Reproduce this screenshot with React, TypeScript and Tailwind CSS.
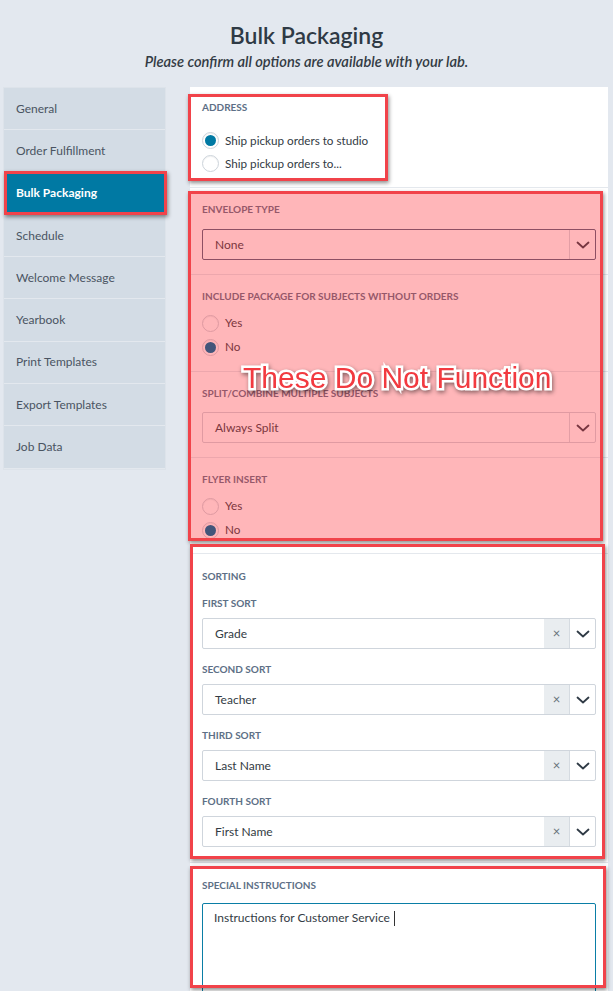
import React from "react";

const navItems = [
  "General",
  "Order Fulfillment",
  "Bulk Packaging",
  "Schedule",
  "Welcome Message",
  "Yearbook",
  "Print Templates",
  "Export Templates",
  "Job Data",
];

const Chevron = () => (
  <svg width="14" height="8" viewBox="0 0 14 8" fill="none">
    <path d="M1.5 1.5 L7 6.5 L12.5 1.5" stroke="#2f3a45" strokeWidth="1.8" strokeLinecap="round" strokeLinejoin="round" />
  </svg>
);

const Label = ({ children, className = "" }: { children: React.ReactNode; className?: string }) => (
  <div className={`text-[10px] leading-[10px] font-bold uppercase text-[#5d6f86] ${className}`}>{children}</div>
);

const Radio = ({
  label,
  checked,
  dot = "#0079a3",
  h = "h-[24px]",
}: {
  label: string;
  checked?: boolean;
  dot?: string;
  h?: string;
}) => (
  <div className={`flex items-center ${h} gap-[6px]`}>
    <span className="w-[17px] h-[17px] rounded-full border border-[#cdd4db] bg-white flex items-center justify-center shadow-[inset_0_1px_1px_rgba(0,0,0,0.06)]">
      {checked && <span className="relative z-10 w-[11px] h-[11px] rounded-full" style={{ backgroundColor: dot }} />}
    </span>
    <span className="text-[11.7px] text-[#333b44]">{label}</span>
  </div>
);

const Select = ({ value, clearable, dark }: { value: string; clearable?: boolean; dark?: boolean }) => (
  <div className={`flex h-[31px] bg-white border rounded-[2px] ${dark ? "border-[#52627c]" : "border-[#cfd5dc]"}`}>
    <div className="flex-1 flex items-center pl-[12px] text-[12px] text-[#333b44]">{value}</div>
    {clearable && (
      <div className="w-[25px] flex items-center justify-center bg-[#e9edf0] text-[13px] text-[#666f78]">×</div>
    )}
    <div className="w-[26px] flex items-center justify-center border-l border-[#d5dbe1]">
      <Chevron />
    </div>
  </div>
);

const Mark = ({ className }: { className: string }) => (
  <div className={`absolute border-[3px] border-[#f1434a] shadow-[1px_2px_4px_rgba(0,0,0,0.45)] pointer-events-none ${className}`} />
);

export default function App() {
  return (
    <div className="min-h-screen bg-[#e3e8ef] font-['Lato','Open_Sans',sans-serif] pb-4">
      <div className="pt-[20px] text-center">
        <h1 className="text-[23px] leading-[30px] font-semibold text-[#2f3a45]">Bulk Packaging</h1>
        <p className="mt-[1px] text-[14.7px] leading-[20px] italic font-semibold text-[#333b44]">
          Please confirm all options are available with your lab.
        </p>
      </div>

      <div className="mt-[16px] flex items-start pl-[3px]">
        <nav className="relative w-[163px] bg-[#d3dce5] border border-[#dde3ea]">
          {navItems.map((item) => (
            <div
              key={item}
              className={`h-[42.3px] flex items-center pl-[12px] text-[12px] border-b border-[#e3e8ee] last:border-b-0 ${
                item === "Bulk Packaging" ? "bg-[#0079a3] text-white font-bold" : "text-[#4a5462]"
              }`}
            >
              {item}
            </div>
          ))}
          <Mark className="left-0 right-[-2px] top-[83px] h-[44px]" />
        </nav>

        <main className="ml-[24px] w-[418px] bg-white">
          {/* Address */}
          <section className="relative px-[12px] pt-[15px] pb-[12px] border-b border-[#e4e8ed]">
            <Label>Address</Label>
            <div className="mt-[17px]">
              <Radio label="Ship pickup orders to studio" checked h="h-[23px]" />
              <Radio label="Ship pickup orders to..." h="h-[23px]" />
            </div>
            <Mark className="left-[-2px] top-[7px] w-[200px] h-[87px]" />
          </section>

          {/* Not functioning group */}
          <div className="relative">
            <section className="px-[12px] pt-[16px] pb-[14px] border-b border-[#e4e8ed]">
              <Label className="mb-[15px]">Envelope Type</Label>
              <Select value="None" dark />
            </section>
            <section className="px-[12px] pt-[16px] pb-[12px] border-b border-[#e4e8ed]">
              <Label className="mb-[10px]">Include Package for Subjects Without Orders</Label>
              <Radio label="Yes" />
              <Radio label="No" checked dot="#43557a" />
            </section>
            <section className="px-[12px] pt-[16px] pb-[14px] border-b border-[#e4e8ed]">
              <Label className="mb-[14px]">Split/Combine Multiple Subjects</Label>
              <Select value="Always Split" />
            </section>
            <section className="px-[12px] pt-[16px] pb-[11px] border-b border-[#e4e8ed]">
              <Label className="mb-[10px]">Flyer Insert</Label>
              <Radio label="Yes" />
              <Radio label="No" checked dot="#43557a" />
            </section>
            <div className="absolute left-[-2px] right-[5px] top-[3px] bottom-[13px] bg-[rgba(255,45,55,0.35)] border-[3px] border-[#f1434a] shadow-[1px_2px_4px_rgba(0,0,0,0.45)]" />
            <div className="absolute left-[53px] top-[175px] font-['Liberation_Sans',Arial,sans-serif] text-[30px] leading-none text-[#f23a40] [-webkit-text-stroke:5px_white] [paint-order:stroke_fill] drop-shadow-[1px_2px_2px_rgba(0,0,0,0.45)] whitespace-nowrap">
              These Do Not Function
            </div>
          </div>

          {/* Sorting */}
          <section className="relative px-[12px] pt-[17px] pb-[15px] border-b border-[#e4e8ed]">
            <Label>Sorting</Label>
            <div className="mt-[17px] flex flex-col gap-[15px]">
              {[
                ["First Sort", "Grade"],
                ["Second Sort", "Teacher"],
                ["Third Sort", "Last Name"],
                ["Fourth Sort", "First Name"],
              ].map(([label, value]) => (
                <div key={label}>
                  <Label className="mb-[10px]">{label}</Label>
                  <Select value={value} clearable />
                </div>
              ))}
            </div>
            <Mark className="left-0 right-[3px] top-[-10px] bottom-[3px]" />
          </section>

          {/* Special instructions */}
          <section className="relative px-[12px] pt-[17px]">
            <Label className="mb-[13px]">Special Instructions</Label>
            <div className="h-[110px] border border-[#0a7ea6] rounded-[2px] px-[11px] pt-[5px] text-[12px] text-[#333b44]">
              Instructions for Customer Service <span className="inline-block w-px h-[15px] bg-[#333] align-middle ml-[1px]" />
            </div>
            <Mark className="left-0 right-[2px] top-[3px] h-[122px]" />
          </section>
        </main>
      </div>
    </div>
  );
}
